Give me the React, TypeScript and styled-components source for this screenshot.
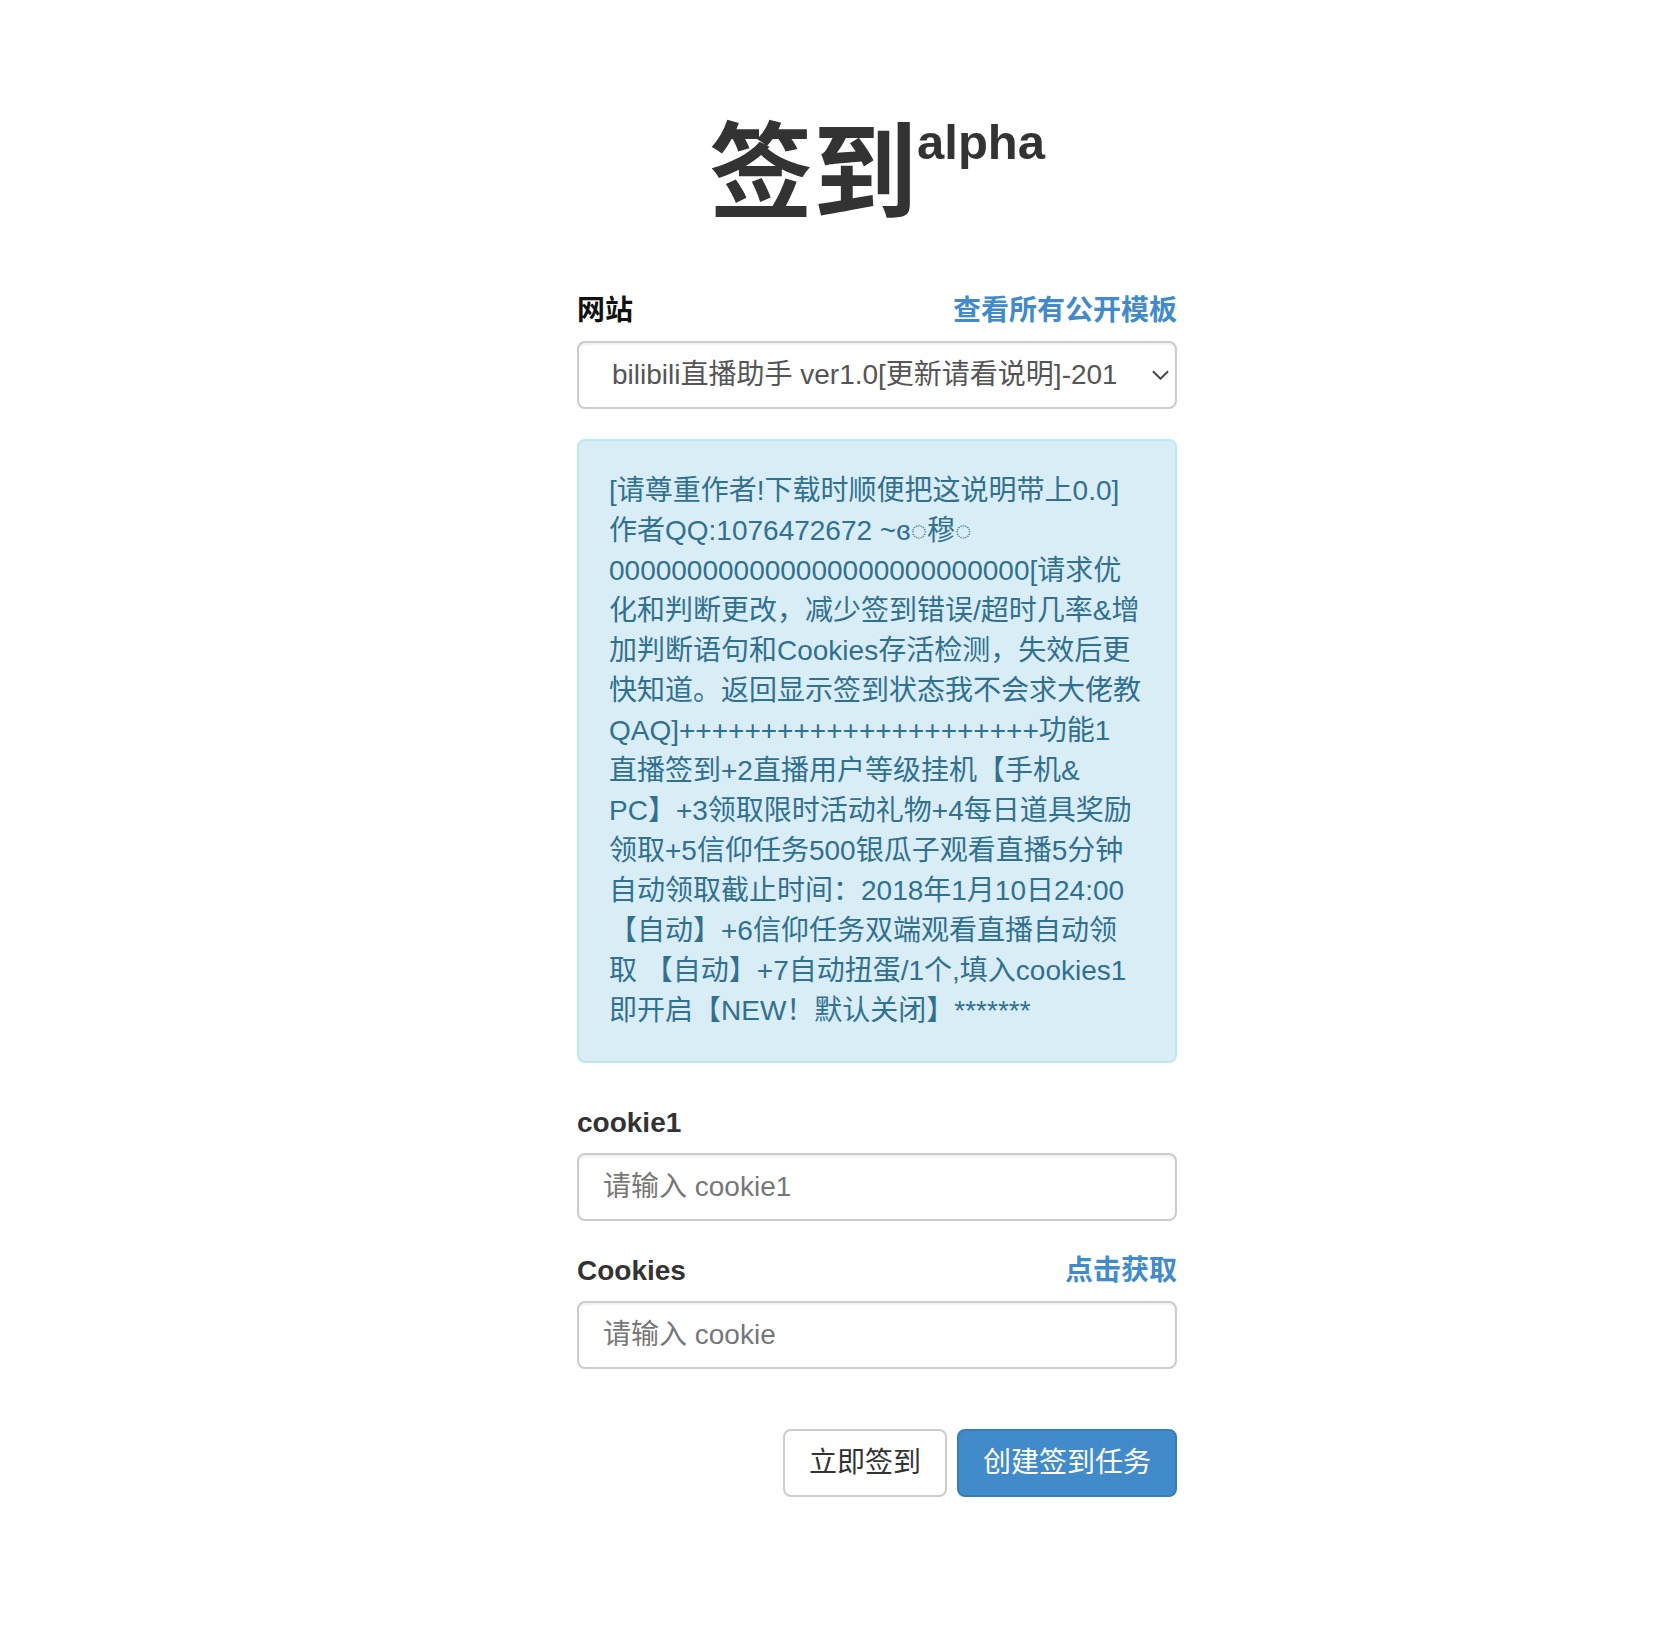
import React from "react";
import styled, { createGlobalStyle } from "styled-components";

const GlobalStyle = createGlobalStyle`
  html, body {
    margin: 0;
    padding: 0;
    background: #fff;
  }
  body {
    font-family: "Liberation Sans", "Noto Sans CJK SC", "DejaVu Sans", sans-serif;
    font-size: 28px;
    line-height: 1.42857;
    color: #333;
  }
  * {
    box-sizing: border-box;
  }
`;

const notes = [
  "[请尊重作者!下载时顺便把这说明带上0.0]",
  "作者QQ:1076472672 ~ɞ◌穆◌",
  "000000000000000000000000000[请求优",
  "化和判断更改，减少签到错误/超时几率&增",
  "加判断语句和Cookies存活检测，失效后更",
  "快知道。返回显示签到状态我不会求大佬教",
  "QAQ]++++++++++++++++++++++功能1",
  "直播签到+2直播用户等级挂机【手机&",
  "PC】+3领取限时活动礼物+4每日道具奖励",
  "领取+5信仰任务500银瓜子观看直播5分钟",
  "自动领取截止时间：2018年1月10日24:00",
  "【自动】+6信仰任务双端观看直播自动领",
  "取 【自动】+7自动扭蛋/1个,填入cookies1",
  "即开启【NEW！默认关闭】*******",
];

const App = () => {
  return (
    <Page>
      <GlobalStyle />
      <Form onSubmit={(e) => e.preventDefault()}>
        <Title>
          签到<Sup>alpha</Sup>
        </Title>

        <FormGroup>
          <LabelRow>
            <Label $strong>网站</Label>
            <Link href="#">查看所有公开模板</Link>
          </LabelRow>
          <SelectBox role="combobox" aria-expanded={false} tabIndex={0}>
            <SelectValue>bilibili直播助手 ver1.0[更新请看说明]-2018-01-10</SelectValue>
            <Chevron viewBox="0 0 18 10" aria-hidden>
              <path d="M1 1 L9 9 L17 1" />
            </Chevron>
          </SelectBox>
        </FormGroup>

        <Alert>
          {notes.map((line, i) => (
            <Line key={i}>{line}</Line>
          ))}
        </Alert>

        <FormGroup>
          <LabelRow>
            <Label>cookie1</Label>
          </LabelRow>
          <Input placeholder="请输入 cookie1" />
        </FormGroup>

        <FormGroup>
          <LabelRow>
            <Label>Cookies</Label>
            <Link href="#">点击获取</Link>
          </LabelRow>
          <Input placeholder="请输入 cookie" />
        </FormGroup>

        <Actions>
          <Button type="button">立即签到</Button>
          <Button type="submit" $primary>
            创建签到任务
          </Button>
        </Actions>
      </Form>
    </Page>
  );
};

export default App;

const Page = styled.div`
  padding: 0 0 120px 98px;
`;

const Form = styled.form`
  width: 600px;
  margin: 0 auto;
`;

const Title = styled.h1`
  margin: 117px 0 60px;
  text-align: center;
  font-size: 104px;
  line-height: 1.1;
  font-weight: 700;
  color: #333;
  white-space: nowrap;
`;

const Sup = styled.sup`
  font-size: 49px;
  font-weight: 700;
  line-height: 0;
  vertical-align: 51px;
`;

const FormGroup = styled.div`
  margin-bottom: 30px;
`;

const LabelRow = styled.div`
  display: flex;
  justify-content: space-between;
  align-items: baseline;
  margin-bottom: 10px;
  line-height: 40px;
`;

const Label = styled.label<{ $strong?: boolean }>`
  font-weight: 700;
  color: ${(p) => (p.$strong ? "#111" : "#333")};
`;

const Link = styled.a`
  font-weight: 700;
  color: #428bca;
  text-decoration: none;
`;

const SelectBox = styled.div`
  display: flex;
  align-items: center;
  height: 68px;
  padding: 0 6px 0 33px;
  border: 2px solid #ccc;
  border-radius: 8px;
  background: #fff;
  color: #555;
  box-shadow: inset 0 2px 2px rgba(0, 0, 0, 0.06);
  cursor: default;
  outline: none;
`;

const SelectValue = styled.span`
  flex: 1;
  min-width: 0;
  margin-right: 36px;
  overflow: hidden;
  white-space: nowrap;
`;

const Chevron = styled.svg`
  flex: none;
  width: 17px;
  height: 10px;
  fill: none;
  stroke: #444;
  stroke-width: 2;
`;

const Alert = styled.div`
  margin-bottom: 40px;
  padding: 30px;
  border: 2px solid #bce8f1;
  border-radius: 8px;
  background: #d9edf7;
  color: #31708f;
  line-height: 40px;
`;

const Line = styled.div`
  white-space: nowrap;
`;

const Input = styled.input`
  display: block;
  width: 100%;
  height: 68px;
  padding: 12px 24px;
  border: 2px solid #ccc;
  border-radius: 8px;
  font: inherit;
  font-size: 28px;
  color: #555;
  box-shadow: inset 0 2px 2px rgba(0, 0, 0, 0.06);
  outline: none;

  &::placeholder {
    color: #777;
  }
`;

const Actions = styled.div`
  display: flex;
  justify-content: flex-end;
  gap: 10px;
  margin-top: 60px;
`;

const Button = styled.button<{ $primary?: boolean }>`
  height: 68px;
  padding: 0 24px;
  border: 2px solid ${(p) => (p.$primary ? "#357ebd" : "#ccc")};
  border-radius: 8px;
  background: ${(p) => (p.$primary ? "#428bca" : "#fff")};
  color: ${(p) => (p.$primary ? "#fff" : "#333")};
  font: inherit;
  font-size: 28px;
  cursor: pointer;
`;
